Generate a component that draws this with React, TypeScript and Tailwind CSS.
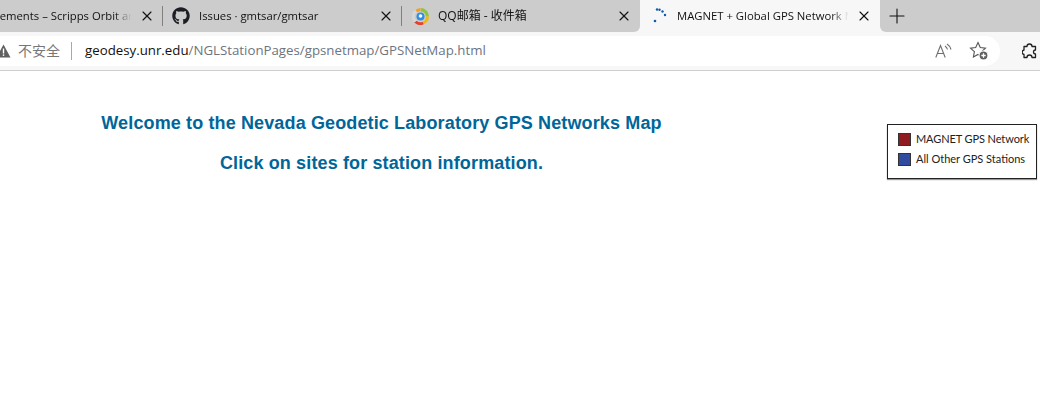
import { Plus, X } from 'lucide-react';
import { FaGithub } from 'react-icons/fa';

const uiFont = "font-['Open_Sans','Noto_Sans_CJK_SC',sans-serif]";
const fade = '[mask-image:linear-gradient(to_right,black_88%,transparent_98%)]';

function Spinner() {
  return (
    <svg viewBox="0 0 16 16" className="w-4 h-4 shrink-0" fill="#0b5cad">
      <circle cx="6" cy="1.500" r="1.200" />
      <circle cx="8.500" cy="1.700" r="1.200" />
      <circle cx="11.500" cy="3.500" r="1.200" />
      <circle cx="14" cy="7" r="1.200" />
      <circle cx="4" cy="13" r="1.300" />
    </svg>
  );
}

function QQMail() {
  return (
    <svg viewBox="0 0 16 16" className="w-[17px] h-[17px] shrink-0">
      <path d="M8 0a8 8 0 0 1 8 8h-3a5 5 0 0 0-5-5z" fill="#8cc63f" />
      <path d="M16 8a8 8 0 0 1-5 7.400L10 13a5 5 0 0 0 3-5z" fill="#f5b60d" />
      <path d="M11 15.400a8 8 0 0 1-9-2L4.500 12a5 5 0 0 0 5.500 1z" fill="#e8412a" />
      <path d="M2 13.400A8 8 0 0 1 8 0v3a5 5 0 0 0-3.500 9z" fill="#d8d8d8" />
      <path d="M8 0a8 8 0 0 0-5 1.800L5 4a5 5 0 0 1 3-1z" fill="#f0a030" />
      <circle cx="8" cy="8" r="3.800" fill="#2f8fe0" />
      <circle cx="8" cy="7.500" r="1.700" fill="#fff" />
    </svg>
  );
}

function Tab({
  icon,
  title,
  active,
  sep,
  width = 'w-[239px]',
  pad = 'pl-[10px]',
  titleClass = 'text-[11.3px]',
}: {
  icon?: React.ReactNode;
  title: string;
  active?: boolean;
  sep?: boolean;
  width?: string;
  pad?: string;
  titleClass?: string;
}) {
  return (
    <div
      className={`relative h-8 ${width} shrink-0 flex items-center ${pad} pr-2 ${
        active ? 'bg-[#f7f7f7] rounded-t-lg' : ''
      }`}
    >
      <div className="w-[26px] flex shrink-0">{icon}</div>
      <span className={`flex-1 ${titleClass} leading-4 text-[#111] whitespace-nowrap overflow-hidden ${fade}`}>{title}</span>
      <X className="w-4 h-4 ml-1 shrink-0 text-[#111]" strokeWidth={1.700} />
      {sep && <div className="absolute right-0 top-[6px] w-px h-5 bg-[#808080]" />}
    </div>
  );
}

export default function App() {
  return (
    <div className={`w-[1040px] h-[420px] bg-white overflow-hidden ${uiFont}`}>
      <div className="h-8 bg-[#f7f7f7] flex">
        <div className="flex shrink-0 -ml-[76px] bg-[#cccccc] rounded-br-md">
          <Tab title="Measurements – Scripps Orbit and Permanent" sep />
          <Tab icon={<FaGithub className="w-[18px] h-[18px] -ml-px text-[#1b1f23]" />} title="Issues · gmtsar/gmtsar" sep />
          <Tab icon={<QQMail />} title="QQ邮箱 - 收件箱" width="w-[238px]" titleClass="text-xs" />
        </div>
        <Tab icon={<Spinner />} title="MAGNET + Global GPS Network Map" active width="w-[240px]" pad="pl-[11px]" />
        <div className="flex-1 bg-[#cccccc] rounded-bl-md flex items-center pl-[5px]">
          <Plus className="w-6 h-6 text-[#111]" strokeWidth={1.100} />
        </div>
      </div>

      <div className="h-[39px] bg-[#f7f7f7] border-b border-[#cfcfcf] flex items-center">
        <div className="w-[1000px] h-[30px] bg-white rounded-r-[15px] flex items-center shrink-0">
          <svg viewBox="0 0 15 14" className="w-[15px] h-[14px] -ml-1 shrink-0" fill="#5f5f5f">
            <path d="M7.500.5l7 13H.5z" />
            <rect x="6.800" y="4.500" width="1.400" height="5" fill="#fff" />
            <rect x="6.800" y="10.400" width="1.400" height="1.500" fill="#fff" />
          </svg>
          <span className="ml-[7px] text-sm text-[#777]">不安全</span>
          <div className="w-px h-[18px] bg-[#a8a8a8] ml-[11px]" />
          <div className="ml-[13px] text-[13.270px] flex-1 whitespace-nowrap">
            <span className="text-[#111]">geodesy.unr.edu</span>
            <span className="text-[#6d7480]">/NGLStationPages/gpsnetmap/GPSNetMap.html</span>
          </div>
          <svg viewBox="0 0 17 16" className="w-[17px] h-4 shrink-0 text-[#6f6f6f]" fill="none" stroke="currentColor" strokeWidth="1.100">
            <path d="M.8 14.500L5.500 2.500l4.700 12M2.500 10.500h6" />
            <path d="M10 3q2 1.300 2.500 3.500M12 1q3 1.800 4 5.500" />
          </svg>
          <svg viewBox="0 0 20 20" className="w-5 h-5 ml-[17px] mr-[11px] shrink-0 text-[#555]" fill="none" stroke="currentColor" strokeWidth="1.100">
            <path d="M9 1.500l2.300 5 5.200.6-3.900 3.600 1 5.300L9 13.500 4.400 16l1-5.300L1.500 7.100l5.200-.6z" />
            <circle cx="14.500" cy="14.500" r="4.500" fill="#5f5f5f" stroke="#fff" />
            <path d="M14.500 12.300v4.400M12.300 14.500h4.400" stroke="#fff" strokeWidth="1.300" />
          </svg>
        </div>
        <svg viewBox="0 0 15 17" className="w-[15px] h-[17px] ml-[22px] shrink-0" fill="none" stroke="#222" strokeWidth="1.300" strokeLinejoin="round">
          <path d="M5 3.500a2.500 2.500 0 0 1 5 0h3.500v3.500a2 2 0 0 0 0 4v3.500H10a2.500 2.500 0 0 0-5 0H2v-3a2.300 2.300 0 0 1 0-4.500v-3.500z" />
        </svg>
      </div>

      <div className="relative">
        <div className="w-[763px] pt-[41px] text-center font-['Liberation_Sans',sans-serif] font-bold text-lg leading-[22px] text-[#006699]">
          <p className="tracking-[0.13px]">Welcome to the Nevada Geodetic Laboratory GPS Networks Map</p>
          <p className="mt-[18px] tracking-[0.13px]">Click on sites for station information.</p>
        </div>
        <div className="absolute left-[887px] top-[53px] w-[150px] h-[55px] border border-[#222] bg-white pl-[10px] py-[7px] flex flex-col gap-[6px] text-[11px] leading-[14px] text-[#222] whitespace-nowrap shadow-[0_1px_1px_rgba(0,0,0,0.4)] font-['Lato',sans-serif]">
          <div className="flex items-center gap-[5px]">
            <span className="w-[13px] h-[13px] bg-[#8f1a1f] border border-[#333]" />
            <span className="tracking-[-0.1px]">MAGNET GPS Network</span>
          </div>
          <div className="flex items-center gap-[5px]">
            <span className="w-[13px] h-[13px] bg-[#2f4a9e] border border-[#333]" />
            All Other GPS Stations
          </div>
        </div>
      </div>
    </div>
  );
}
